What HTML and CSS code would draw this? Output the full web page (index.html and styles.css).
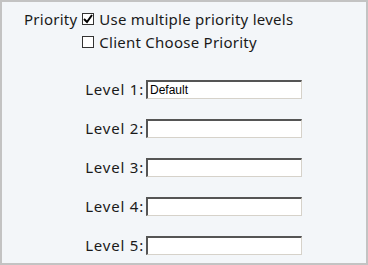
FILE: index.html
```html
<!DOCTYPE html>
<html lang="en">
  <head>
    <meta charset="UTF-8" />
    <meta name="viewport" content="width=device-width, initial-scale=1.0" />
    <title>Priority</title>
    <link rel="stylesheet" href="styles.css">
  </head>
  <body>
    <div class="panel">
      <div class="priority">
        <span class="priorityLabel">Priority</span>
        <div class="options">
          <label class="option">
            <span class="box">
              <svg width="10" height="10" viewBox="0 0 10 10">
                <path d="M1 5 L4 8 L9 1" fill="none" stroke="#000" stroke-width="2" />
              </svg>
            </span>
            Use multiple priority levels
          </label>
          <label class="option">
            <span class="box"></span>
            Client Choose Priority
          </label>
        </div>
      </div>

      <div class="levels">
        <div class="levelRow">
          <span class="levelLabel">Level 1:</span>
          <input class="levelInput" type="text" value="Default" />
        </div>
        <div class="levelRow">
          <span class="levelLabel">Level 2:</span>
          <input class="levelInput" type="text" />
        </div>
        <div class="levelRow">
          <span class="levelLabel">Level 3:</span>
          <input class="levelInput" type="text" />
        </div>
        <div class="levelRow">
          <span class="levelLabel">Level 4:</span>
          <input class="levelInput" type="text" />
        </div>
        <div class="levelRow">
          <span class="levelLabel">Level 5:</span>
          <input class="levelInput" type="text" />
        </div>
      </div>
    </div>
  </body>
</html>
```

FILE: styles.css
```css
html,
body {
  margin: 0;
}
body {
  font-family: "Noto Sans", "DejaVu Sans", sans-serif;
  font-size: 15px;
  letter-spacing: 0.25px;
  color: #1a1a1a;
}
.panel {
  box-sizing: border-box;
  width: 368px;
  height: 265px;
  border: 2px solid #c3c3c3;
  background-color: #f3f6f9;
  padding-top: 7px;
}
.priority {
  display: flex;
  padding-left: 22px;
}
.priorityLabel {
  margin-right: 5px;
  line-height: 20px;
}
.options {
  display: flex;
  flex-direction: column;
  gap: 3px;
}
.option {
  display: flex;
  align-items: center;
  gap: 5px;
  line-height: 20px;
}
.box {
  box-sizing: border-box;
  width: 12px;
  height: 12px;
  border: 1px solid #333;
  background: white;
  display: flex;
  align-items: center;
  justify-content: center;
}
.levels {
  display: flex;
  flex-direction: column;
  gap: 20px;
  padding-top: 28px;
  line-height: 19px;
}
.levelRow {
  display: flex;
  align-items: center;
  height: 19px;
}
.levelLabel {
  width: 144px;
  text-align: right;
  padding-right: 2px;
  box-sizing: border-box;
  letter-spacing: 0.8px;
}
.levelInput {
  box-sizing: border-box;
  width: 156px;
  height: 19px;
  margin: 0;
  padding: 0 2px;
  border-style: solid;
  border-width: 2px 1px 1px 2px;
  border-color: #555 #d6d2ca #d6d2ca #555;
  background: white;
  font-family: "Liberation Sans", Arial, sans-serif;
  font-size: 12px;
  letter-spacing: 0;
  color: #000;
}
```
